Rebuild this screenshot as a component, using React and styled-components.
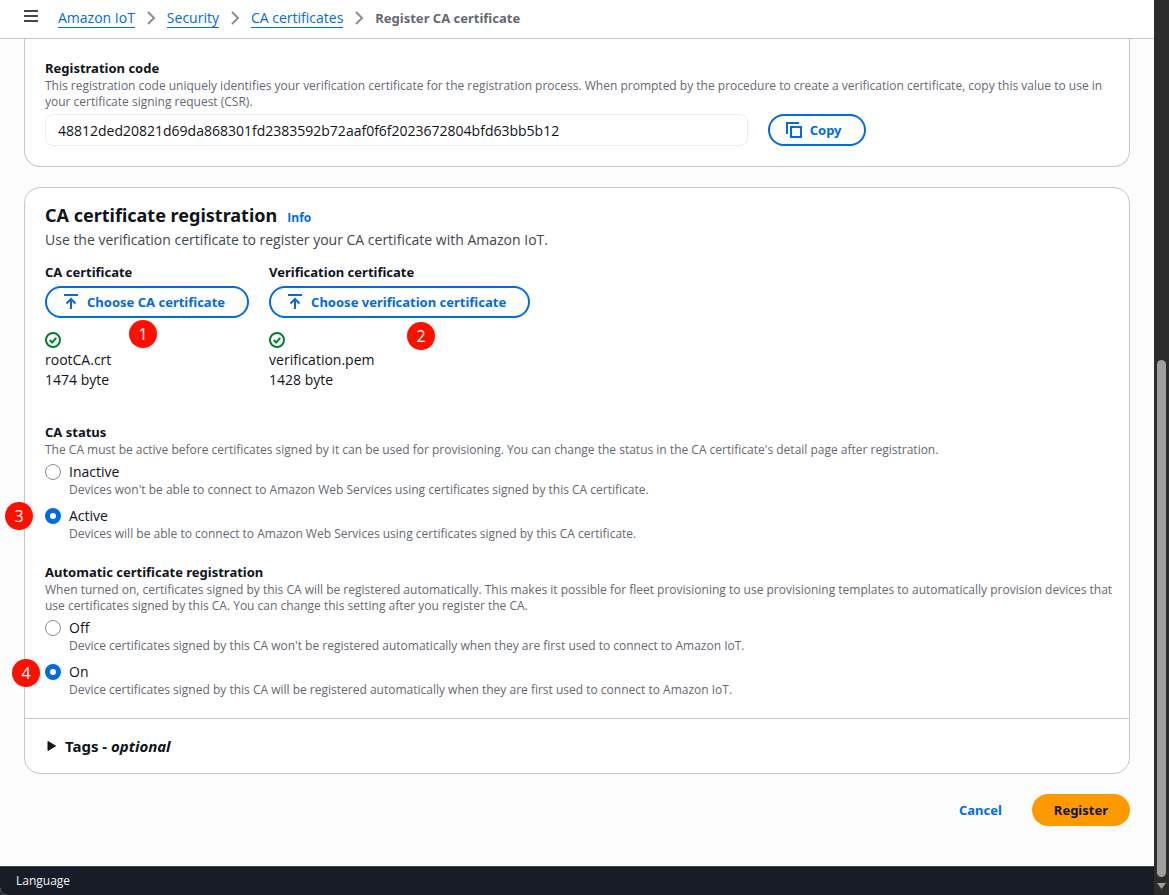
import React, { useState } from "react";
import styled, { createGlobalStyle, css } from "styled-components";

const GlobalStyle = createGlobalStyle`
  * {
    box-sizing: border-box;
  }

  body {
    margin: 0;
    background: #2c2c2c;
    color: #0f141a;
    font-family: "Open Sans", "Noto Sans", sans-serif;
    font-size: 14px;
    line-height: 20px;
  }

  button,
  input {
    font: inherit;
    color: inherit;
  }
`;

const strong = css`
  font-family: "Noto Sans", sans-serif;
  font-size: 13px;
  font-weight: 700;
`;

const Window = styled.div`
  display: flex;
  height: 100vh;
`;

const Page = styled.div`
  flex: 1;
  min-width: 0;
  display: flex;
  flex-direction: column;
  overflow: hidden;
  background: #fcfcfd;
  border-bottom-left-radius: 8px;
`;

const TopBar = styled.header`
  flex: none;
  display: flex;
  align-items: center;
  gap: 20px;
  height: 39px;
  padding: 0 24px 2px;
  background: #fff;
  border-bottom: 1px solid #c6c6cd;
`;

const MenuButton = styled.button`
  display: flex;
  padding: 0 0 4px;
  border: 0;
  background: none;
  color: #424650;
  cursor: pointer;
`;

const Crumbs = styled.ol`
  display: flex;
  align-items: center;
  margin: 0;
  padding: 0;
  list-style: none;

  li {
    display: flex;
    align-items: center;
  }

  li:last-child {
    ${strong}
    color: #656871;
  }

  a {
    color: #006ce0;
    line-height: 18px;
    text-decoration: none;
    border-bottom: 1px solid #006ce0;
  }

  svg {
    margin: 0 8px;
  }
`;

const Content = styled.main`
  flex: 1;
  min-height: 0;
  overflow: hidden;
  padding: 0 24px;
`;

const Card = styled.section`
  margin-bottom: 20px;
  background: #fff;
  border: 1px solid #c6c6cd;
  border-radius: 16px;
`;

const CodeCard = styled(Card)`
  padding: 19px 20px 20px;
  border-top: 0;
  border-radius: 0 0 16px 16px;
`;

const CardBody = styled.div`
  padding: 15px 12px 20px 20px;
`;

const Label = styled.label`
  display: block;
  ${strong}
`;

const Hint = styled.p`
  margin: 0;
  color: #656871;
  font-size: 12px;
  line-height: 16px;
`;

const CodeRow = styled.div`
  display: grid;
  grid-template-columns: repeat(12, 1fr);
  gap: 20px;
  margin-top: 4px;
`;

const CodeInput = styled.input`
  grid-column: span 8;
  min-width: 0;
  height: 32px;
  padding: 0 12px;
  background: #fff;
  border: 1px solid #ebebf0;
  border-radius: 8px;
`;

const Button = styled.button`
  ${strong}
  display: inline-flex;
  align-items: center;
  justify-content: center;
  gap: 8px;
  height: 32px;
  padding: 0 20px;
  border: 2px solid #006ce0;
  border-radius: 20px;
  background: #fff;
  color: #006ce0;
  white-space: nowrap;
  cursor: pointer;
`;

const IconButton = styled(Button)`
  padding: 0 22px 0 16px;
`;

const CopyButton = styled(IconButton)`
  grid-column: span 4;
  justify-self: start;
`;

const LinkButton = styled(Button)`
  border-color: transparent;
  background: none;
`;

const PrimaryButton = styled(Button)`
  border-color: #ff9900;
  background: #ff9900;
  color: #0f141a;
`;

const TitleRow = styled.div`
  display: flex;
  align-items: baseline;
  gap: 10px;
  height: 24px;

  h2 {
    margin: 0;
    font-family: "Noto Sans", sans-serif;
    font-size: 18px;
    line-height: 24px;
  }

  a {
    color: #006ce0;
    font-size: 12px;
    font-weight: 700;
    text-decoration: none;
  }
`;

const Subtitle = styled.p`
  margin: 3px 0 12px;
  color: #424650;
`;

const Uploads = styled.div`
  display: flex;
  gap: 20px;
  margin-bottom: 32px;
`;

const UploadField = styled.div`
  position: relative;

  ${Button} {
    margin: 4px 0 12px;
  }
`;

const FileInfo = styled.div`
  svg {
    display: block;
    margin: 2px 0;
  }
`;

const Group = styled.fieldset`
  min-width: 0;
  margin: 0 0 20px;
  padding: 0;
  border: 0;

  &:last-child {
    margin-bottom: 0;
  }

  legend {
    padding: 0;
    ${strong}
  }
`;

const Option = styled.div`
  position: relative;
  display: grid;
  grid-template-columns: 16px 1fr;
  column-gap: 8px;
  align-items: center;
  margin-top: ${(props) => (props.$first ? "4px" : "8px")};

  ${Hint} {
    grid-column: 2;
  }
`;

const Radio = styled.input`
  appearance: none;
  width: 16px;
  height: 16px;
  margin: 0;
  border: 1px solid #8c8c94;
  border-radius: 50%;
  background: #fff;

  &:checked {
    border: 5px solid #006ce0;
  }
`;

const Badge = styled.span`
  position: absolute;
  left: ${(props) => props.$left};
  top: ${(props) => props.$top};
  width: 28px;
  height: 28px;
  border-radius: 50%;
  background: #ff0f00;
  color: #fff;
  font-size: 16px;
  line-height: 28px;
  text-align: center;
`;

const TagsToggle = styled.button`
  display: flex;
  align-items: center;
  gap: 8px;
  width: 100%;
  height: 55px;
  padding: 0 20px;
  border: 0;
  border-top: 1px solid #c6c6cd;
  background: none;
  font-family: "Noto Sans", sans-serif;
  font-size: 15px;
  font-weight: 700;
  cursor: pointer;
`;

const Actions = styled.div`
  display: flex;
  justify-content: flex-end;
  gap: 8px;
`;

const Footer = styled.footer`
  flex: none;
  height: 29px;
  padding: 4px 16px;
  background: #161d26;
  border-top: 1px solid #424650;
  color: #f3f3f7;
  font-size: 12px;
`;

const Scrollbar = styled.div`
  flex: none;
  display: flex;
  flex-direction: column;
  align-items: center;
  width: 15px;
  padding-bottom: 6px;
  background: #2c2c2c;
`;

const Track = styled.div`
  flex: 1;
  display: flex;
  flex-direction: column;
  justify-content: flex-end;
  margin-bottom: 6px;
`;

const Thumb = styled.div`
  width: 9px;
  height: 59%;
  border-radius: 5px;
  background: #9f9f9f;
`;

const Chevron = () => (
  <svg width="16" height="16" viewBox="0 0 16 16" aria-hidden="true">
    <path d="M5 2l6 6-6 6" fill="none" stroke="#8c8c94" strokeWidth="2" />
  </svg>
);

const UploadIcon = () => (
  <svg width="16" height="16" viewBox="0 0 16 16" aria-hidden="true">
    <path
      d="M1 1h14M8 15V5M3.500 9.500L8 5l4.500 4.500"
      fill="none"
      stroke="currentColor"
      strokeWidth="2"
    />
  </svg>
);

const CopyIcon = () => (
  <svg width="16" height="16" viewBox="0 0 16 16" aria-hidden="true">
    <path
      d="M1 12V1h12M5 5h10v10H5z"
      fill="none"
      stroke="currentColor"
      strokeWidth="2"
    />
  </svg>
);

const SuccessIcon = () => (
  <svg width="16" height="16" viewBox="0 0 16 16" aria-label="Success">
    <g fill="none" stroke="#00802f" strokeWidth="2">
      <circle cx="8" cy="8" r="7" />
      <path d="M4.8 8l2.4 2.500 4-4.600" />
    </g>
  </svg>
);

const crumbs = ["Amazon IoT", "Security", "CA certificates"];

const uploads = [
  {
    id: "ca-file",
    label: "CA certificate",
    action: "Choose CA certificate",
    file: "rootCA.crt",
    size: "1474 byte",
    badge: { text: "1", left: "84px", top: "58px" },
  },
  {
    id: "verification-file",
    label: "Verification certificate",
    action: "Choose verification certificate",
    file: "verification.pem",
    size: "1428 byte",
    badge: { text: "2", left: "138px", top: "60px" },
  },
];

const groups = [
  {
    name: "status",
    legend: "CA status",
    hint: "The CA must be active before certificates signed by it can be used for provisioning. You can change the status in the CA certificate's detail page after registration.",
    options: [
      {
        value: "Inactive",
        hint: "Devices won't be able to connect to Amazon Web Services using certificates signed by this CA certificate.",
      },
      {
        value: "Active",
        hint: "Devices will be able to connect to Amazon Web Services using certificates signed by this CA certificate.",
        badge: { text: "3", left: "-40px", top: "-4px" },
      },
    ],
  },
  {
    name: "auto",
    legend: "Automatic certificate registration",
    hint: "When turned on, certificates signed by this CA will be registered automatically. This makes it possible for fleet provisioning to use provisioning templates to automatically provision devices that use certificates signed by this CA. You can change this setting after you register the CA.",
    options: [
      {
        value: "Off",
        hint: "Device certificates signed by this CA won't be registered automatically when they are first used to connect to Amazon IoT.",
      },
      {
        value: "On",
        hint: "Device certificates signed by this CA will be registered automatically when they are first used to connect to Amazon IoT.",
        badge: { text: "4", left: "-33px", top: "-3px" },
      },
    ],
  },
];

const Step = ({ badge }) => (
  <Badge $left={badge.left} $top={badge.top}>
    {badge.text}
  </Badge>
);

const RadioGroup = ({ group, value, onChange }) => (
  <Group>
    <legend>{group.legend}</legend>
    <Hint>{group.hint}</Hint>
    {group.options.map((option, index) => {
      const id = `${group.name}-${option.value}`;
      return (
        <Option key={id} $first={index === 0}>
          <Radio
            type="radio"
            id={id}
            name={group.name}
            checked={value === option.value}
            onChange={() => onChange(option.value)}
          />
          <label htmlFor={id}>{option.value}</label>
          <Hint>{option.hint}</Hint>
          {option.badge && <Step badge={option.badge} />}
        </Option>
      );
    })}
  </Group>
);

const App = () => {
  const [values, setValues] = useState({ status: "Active", auto: "On" });

  return (
    <>
      <GlobalStyle />
      <Window>
        <Page>
          <TopBar>
            <MenuButton aria-label="Open navigation">
              <svg width="14" height="16" viewBox="0 0 14 16">
                <path
                  d="M0 3h14M0 8h14M0 13h14"
                  stroke="currentColor"
                  strokeWidth="2"
                />
              </svg>
            </MenuButton>
            <nav aria-label="Breadcrumbs">
              <Crumbs>
                {crumbs.map((crumb) => (
                  <li key={crumb}>
                    <a href="#">{crumb}</a>
                    <Chevron />
                  </li>
                ))}
                <li>Register CA certificate</li>
              </Crumbs>
            </nav>
          </TopBar>

          <Content>
            <CodeCard>
              <Label htmlFor="code">Registration code</Label>
              <Hint>
                This registration code uniquely identifies your verification
                certificate for the registration process. When prompted by the
                procedure to create a verification certificate, copy this value
                to use in your certificate signing request (CSR).
              </Hint>
              <CodeRow>
                <CodeInput
                  id="code"
                  readOnly
                  value="48812ded20821d69da868301fd2383592b72aaf0f6f2023672804bfd63bb5b12"
                />
                <CopyButton>
                  <CopyIcon />
                  Copy
                </CopyButton>
              </CodeRow>
            </CodeCard>

            <Card>
              <CardBody>
                <TitleRow>
                  <h2>CA certificate registration</h2>
                  <a href="#">Info</a>
                </TitleRow>
                <Subtitle>
                  Use the verification certificate to register your CA
                  certificate with Amazon IoT.
                </Subtitle>
                <Uploads>
                  {uploads.map((item) => (
                    <UploadField key={item.id}>
                      <Label htmlFor={item.id}>{item.label}</Label>
                      <IconButton id={item.id}>
                        <UploadIcon />
                        {item.action}
                      </IconButton>
                      <FileInfo>
                        <SuccessIcon />
                        <div>{item.file}</div>
                        <div>{item.size}</div>
                      </FileInfo>
                      <Step badge={item.badge} />
                    </UploadField>
                  ))}
                </Uploads>
                {groups.map((group) => (
                  <RadioGroup
                    key={group.name}
                    group={group}
                    value={values[group.name]}
                    onChange={(value) =>
                      setValues({ ...values, [group.name]: value })
                    }
                  />
                ))}
              </CardBody>
              <TagsToggle aria-expanded="false">
                <svg width="12" height="12" viewBox="0 0 12 12">
                  <path
                    d="M3 1.500v9L10.500 6z"
                    fill="currentColor"
                    stroke="currentColor"
                    strokeLinejoin="round"
                  />
                </svg>
                <span>
                  Tags - <em>optional</em>
                </span>
              </TagsToggle>
            </Card>

            <Actions>
              <LinkButton>Cancel</LinkButton>
              <PrimaryButton>Register</PrimaryButton>
            </Actions>
          </Content>

          <Footer>Language</Footer>
        </Page>
        <Scrollbar aria-hidden="true">
          <Track>
            <Thumb />
          </Track>
          <svg width="9" height="6" viewBox="0 0 9 6">
            <path d="M0 0h9L4.500 6z" fill="#9f9f9f" />
          </svg>
        </Scrollbar>
      </Window>
    </>
  );
};

export default App;
